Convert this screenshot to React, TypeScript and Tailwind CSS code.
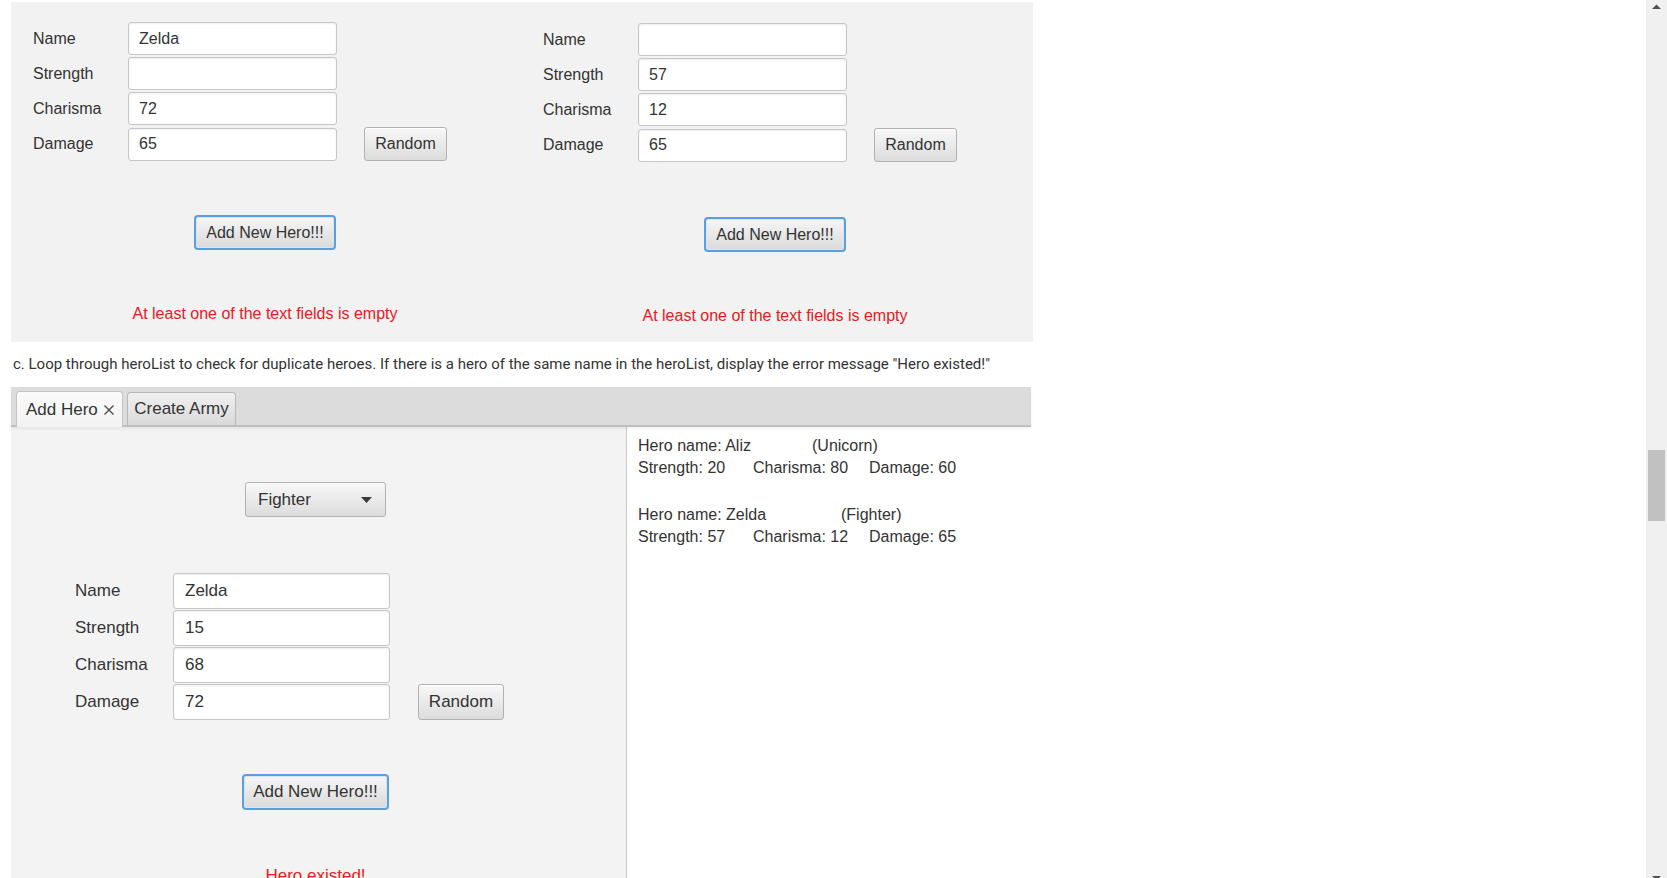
import React from "react";

const ui = "font-['Liberation_Sans',Arial,sans-serif]";
const btn =
  "bg-linear-to-b from-[#f8f8f8] to-[#dcdcdc] border border-[#b2b2b2] rounded-[3px] text-[#333] flex items-center justify-center shadow-[inset_0_1px_0_rgba(255,255,255,0.8)]";
const combo =
  "bg-linear-to-b from-[#f8f8f8] to-[#dcdcdc] border border-[#b2b2b2] rounded-[3px] text-[#333] flex items-center justify-between shadow-[inset_0_1px_0_rgba(255,255,255,0.8)]";
const defBtn =
  "bg-linear-to-b from-[#f6f6f6] to-[#dadada] border-2 border-[#5b9fe0] rounded-[4px] text-[#333] flex items-center justify-center shadow-[inset_0_0_0_1px_#d6e6f6]";
const field =
  "bg-white border border-[#c6c6c6] rounded-[3px] text-[#333] flex items-center shadow-[inset_0_1px_2px_rgba(0,0,0,0.07)]";

type FormData = { name: string; strength: string; charisma: string; damage: string };

function TopForm({ data, shift }: { data: FormData; shift?: boolean }) {
  const rows: [string, string][] = [
    ["Name", data.name],
    ["Strength", data.strength],
    ["Charisma", data.charisma],
    ["Damage", data.damage],
  ];
  return (
    <div className={shift ? "w-[510px] shrink-0 pt-[21px] flex flex-col" : "w-[510px] shrink-0 pt-[20px] flex flex-col"}>
      <div className="flex flex-col gap-[2px]">
        {rows.map(([label, value], i) => (
          <div key={label} className="flex items-center">
            <div className="w-[95px] text-[16px] text-[#333]">{label}</div>
            <div className={`${field} w-[209px] h-[33px] pl-[10px] text-[16px]`}>{value}</div>
            {i === 3 && (
              <div className={`${btn} ml-[27px] w-[83px] h-[34px] text-[16px]`}>Random</div>
            )}
          </div>
        ))}
      </div>
      <div className={shift ? "w-[464px] flex flex-col items-center mt-[55px]" : "w-[464px] flex flex-col items-center mt-[54px]"}>
        <div className={`${defBtn} w-[142px] h-[35px] text-[16px]`}>Add New Hero!!!</div>
        <div className="mt-[54px] text-[16px] leading-[19px] text-[#e3201c]">
          At least one of the text fields is empty
        </div>
      </div>
    </div>
  );
}

function CloseIcon() {
  return (
    <svg width="12" height="12" viewBox="0 0 12 12" className="ml-[5px]">
      <path d="M1.5 1.5 L10.5 10.5 M10.5 1.5 L1.5 10.5" stroke="#4a4a4a" strokeWidth="1.4" fill="none" />
    </svg>
  );
}

export default function App() {
  const bottomRows: [string, string][] = [
    ["Name", "Zelda"],
    ["Strength", "15"],
    ["Charisma", "68"],
    ["Damage", "72"],
  ];
  return (
    <div className={`w-full h-screen overflow-hidden bg-white flex ${ui}`}>
      <div className="flex-1 pl-[11px] flex flex-col min-w-0">
        {/* Top screenshot panel */}
        <div className="mt-[2px] w-[1022px] h-[340px] shrink-0 bg-[#f2f2f2] flex pl-[22px]">
          <TopForm data={{ name: "Zelda", strength: "", charisma: "72", damage: "65" }} />
          <TopForm data={{ name: "", strength: "57", charisma: "12", damage: "65" }} shift />
        </div>

        {/* Description */}
        <p className="mt-[12px] pl-[2px] leading-[20px] text-[15px] text-[#333] font-['Roboto',Arial,sans-serif] whitespace-nowrap">
          c. Loop through heroList to check for duplicate heroes. If there is a hero of the same name in the heroList, display the error message "Hero existed!"
        </p>

        {/* Tab application */}
        <div className="mt-[13px] w-[1020px] flex flex-col flex-1 min-h-0">
          <div className="h-[40px] shrink-0 bg-[#dcdcdc] border-b-2 border-[#bfbfbf] flex items-end pl-[5px] gap-[4px] shadow-[0_2px_3px_rgba(0,0,0,0.06)] relative z-10">
            <div className="relative -mb-[2px] h-[36px] w-[107px] rounded-t-[4px] border border-b-0 border-[#c4c4c4] bg-linear-to-b from-[#fafafa] to-[#f3f3f3] flex items-center pl-[9px] text-[17px] text-[#333]">
              Add Hero
              <CloseIcon />
            </div>
            <div className="h-[33px] w-[109px] rounded-t-[4px] border border-b-0 border-[#b8b8b8] bg-linear-to-b from-[#f1f1f1] to-[#d9d9d9] flex items-center justify-center text-[17px] text-[#333]">
              Create Army
            </div>
          </div>

          <div className="flex flex-1 min-h-0">
            <div className="w-[615px] bg-[#f3f3f3] flex flex-col items-center pr-[6px]">
              <div className={`${combo} mt-[55px] w-[141px] h-[35px] shrink-0 pl-[12px] pr-[13px] text-[17px]`}>
                <span>Fighter</span>
                <svg width="11" height="6" viewBox="0 0 11 6">
                  <path d="M0 0 L11 0 L5.5 6 Z" fill="#3a3a3a" />
                </svg>
              </div>

              <div className="mt-[56px] self-start ml-[64px] flex flex-col gap-[1px] shrink-0">
                {bottomRows.map(([label, value], i) => (
                  <div key={label} className="flex items-center">
                    <div className="w-[98px] text-[17px] text-[#333]">{label}</div>
                    <div className={`${field} w-[217px] h-[36px] pl-[11px] text-[17px]`}>{value}</div>
                    {i === 3 && (
                      <div className={`${btn} ml-[28px] w-[86px] h-[36px] text-[17px]`}>Random</div>
                    )}
                  </div>
                ))}
              </div>

              <div className={`${defBtn} mt-[54px] w-[147px] h-[36px] shrink-0 text-[17px]`}>Add New Hero!!!</div>
              <div className="mt-[56px] shrink-0 text-[17px] leading-[20px] text-[#e3201c]">Hero existed!</div>
            </div>

            <div className="flex-1 bg-white border-l border-[#c8c8c8] pl-[11px] pt-[8px] text-[16px] leading-[22px] text-[#333]">
              <div className="flex">
                <span className="w-[174px]">Hero name: Aliz</span>
                <span>(Unicorn)</span>
              </div>
              <div className="flex">
                <span className="w-[115px]">Strength: 20</span>
                <span className="w-[116px]">Charisma: 80</span>
                <span>Damage: 60</span>
              </div>
              <div className="h-[25px]" />
              <div className="flex">
                <span className="w-[203px]">Hero name: Zelda</span>
                <span>(Fighter)</span>
              </div>
              <div className="flex">
                <span className="w-[115px]">Strength: 57</span>
                <span className="w-[116px]">Charisma: 12</span>
                <span>Damage: 65</span>
              </div>
            </div>
          </div>
        </div>
      </div>

      {/* Scrollbar */}
      <div className="w-[21px] h-full bg-[#f0f0f0] relative shrink-0">
        <svg width="21" height="12" viewBox="0 0 21 12" className="absolute top-0 left-0">
          <path d="M6 9 L15 9 L10.5 4.5 Z" fill="#505050" />
        </svg>
        <div className="absolute top-[450px] left-[2px] w-[17px] h-[71px] bg-[#c1c1c1]" />
        <svg width="21" height="4" viewBox="0 0 21 4" className="absolute bottom-0 left-0">
          <path d="M6 2 L15 2 L10.5 6 Z" fill="#505050" />
        </svg>
      </div>
    </div>
  );
}
